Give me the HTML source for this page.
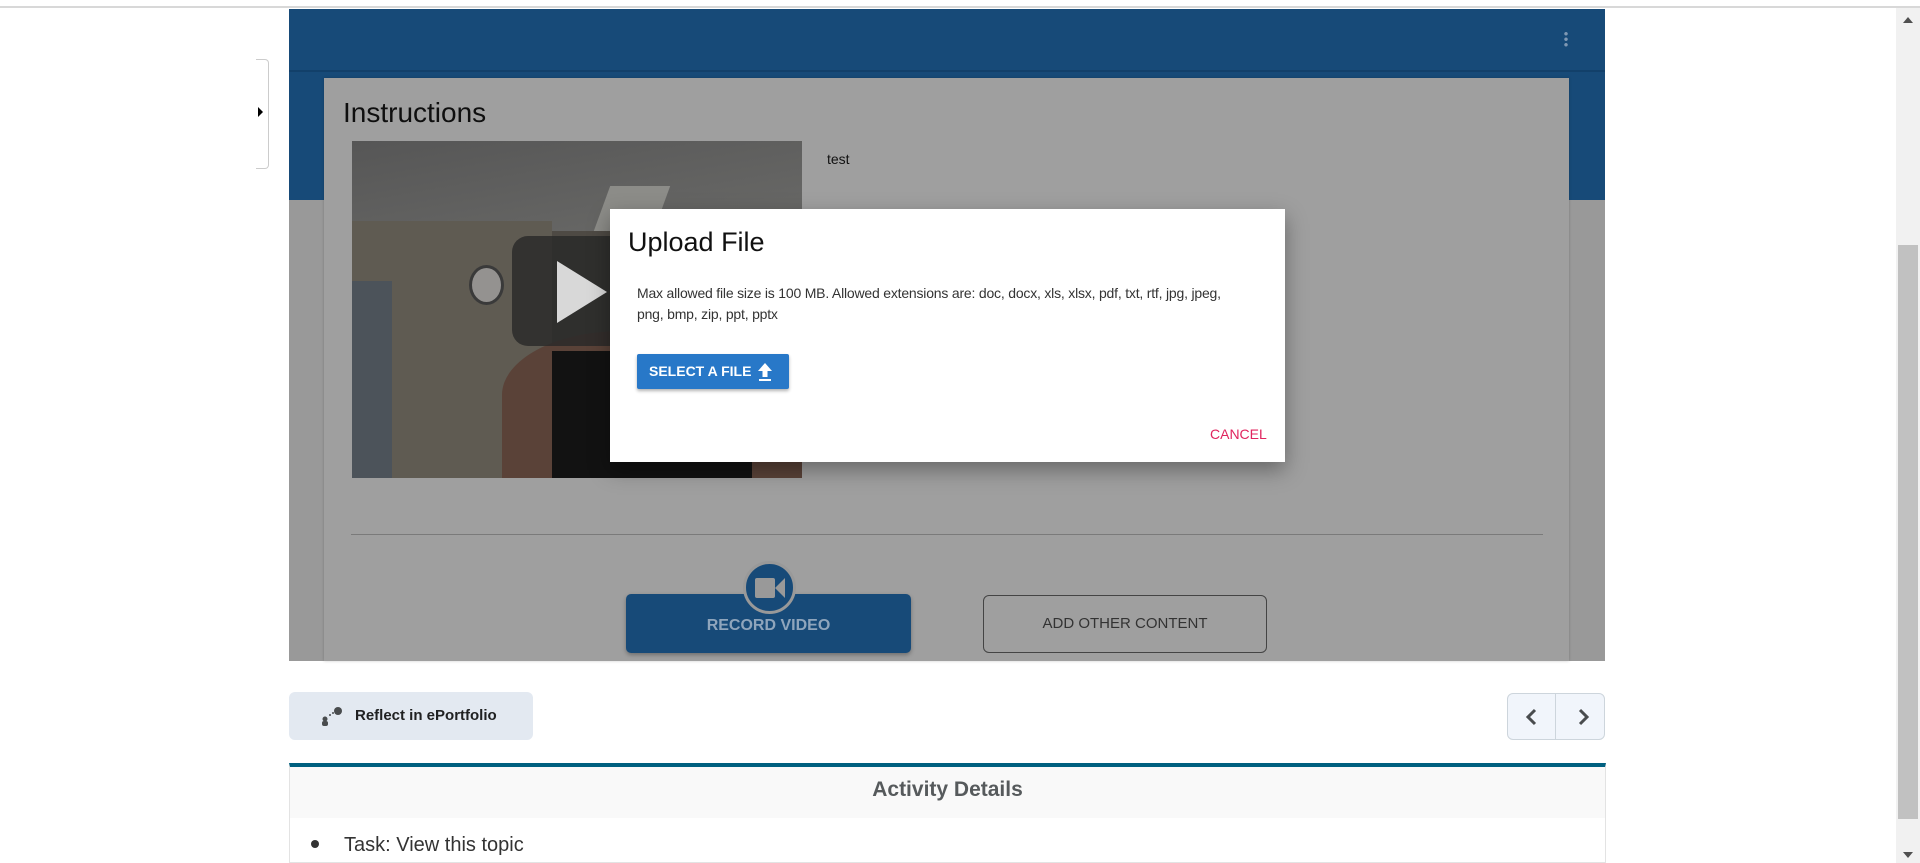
<!DOCTYPE html>
<html><head><style>
*{box-sizing:border-box;margin:0;padding:0}
body{width:1920px;height:863px;background:#fff;position:relative;overflow:hidden;font-family:"Liberation Sans",sans-serif}
.abs{position:absolute}
</style></head><body>
<div class="abs" style="left:0;top:0;width:1920px;height:8px;border-bottom:2px solid #d8d8d8;background:#fff"></div>
<div class="abs" style="left:256px;top:59px;width:13px;height:110px;border:1px solid #ccc;border-left:none;border-radius:0 4px 4px 0;background:#fff"></div>
<div class="abs" style="left:258px;top:107px;width:0;height:0;border-top:5px solid transparent;border-bottom:5px solid transparent;border-left:5px solid #000"></div>
<div class="abs" style="left:289px;top:9px;width:1316px;height:652px;background:#999"></div>
<div class="abs" style="left:289px;top:9px;width:1316px;height:191px;background:#174a78"></div>
<div class="abs" style="left:289px;top:70px;width:1316px;height:2px;background:#12406a"></div>
<div class="abs" style="left:1564px;top:31px;width:4px;height:16px;background:radial-gradient(circle,#7f98b3 1.5px,transparent 2px) 0 0/4px 5.5px"></div>
<div class="abs" style="left:324px;top:78px;width:1245px;height:583px;background:#9f9f9f;box-shadow:0 0 3px rgba(0,0,0,.2)"></div>
<div class="abs" style="left:343px;top:97px;font-size:28px;color:#0f0f0f">Instructions</div>
<div class="abs" style="left:827px;top:151px;font-size:14px;color:#111">test</div>
<div class="abs" style="left:352px;top:141px;width:450px;height:337px;overflow:hidden;background:#4e4a44">
 <div class="abs" style="left:0;top:0;width:450px;height:90px;background:linear-gradient(170deg,#565656,#6a6a68)"></div>
 <div class="abs" style="left:0;top:80px;width:200px;height:257px;background:#5f5b52"></div>
 <div class="abs" style="left:0;top:140px;width:40px;height:200px;background:#4c535a"></div>
 <div class="abs" style="left:250px;top:45px;width:60px;height:45px;background:#8c8c88;transform:skew(-20deg)"></div>
 <div class="abs" style="left:117px;top:124px;width:35px;height:40px;border-radius:50%;background:#949290;border:3px solid #3a3a3a"></div>
 <div class="abs" style="left:150px;top:190px;width:300px;height:160px;border-radius:40% 40% 0 0;background:#5a4238"></div>
 <div class="abs" style="left:200px;top:210px;width:200px;height:130px;background:#121212"></div>
 <div class="abs" style="left:160px;top:95px;width:120px;height:110px;background:rgba(40,40,40,.8);border-radius:16px"></div>
 <div class="abs" style="left:205px;top:120px;width:0;height:0;border-top:31px solid transparent;border-bottom:31px solid transparent;border-left:50px solid #d8d8d8"></div>
</div>
<div class="abs" style="left:351px;top:534px;width:1192px;height:1px;background:#7a7a7a"></div>
<div class="abs" style="left:626px;top:594px;width:285px;height:59px;background:#174a78;border-radius:5px;box-shadow:0 2px 4px rgba(0,0,0,.3);color:#8fa5bc;font-weight:bold;font-size:16px;text-align:center;line-height:64px">RECORD VIDEO</div>
<div class="abs" style="left:743px;top:561px;width:53px;height:53px;border-radius:50%;background:#174a78;border:3px solid #999"></div>
<div class="abs" style="left:755px;top:578px;width:20px;height:20px;background:#999;border-radius:2px"></div>
<div class="abs" style="left:773px;top:578px;width:0;height:0;border-top:10px solid transparent;border-bottom:10px solid transparent;border-right:10px solid #999;transform:translateX(2px)"></div>
<div class="abs" style="left:983px;top:595px;width:284px;height:58px;border:1px solid #444;border-radius:6px;color:#333;font-size:15px;text-align:center;line-height:56px">ADD OTHER CONTENT</div>
<div class="abs" style="left:610px;top:209px;width:675px;height:253px;background:#fff;box-shadow:0 8px 20px rgba(0,0,0,.35)">
 <div class="abs" style="left:18px;top:18px;font-size:27px;color:#111">Upload File</div>
 <div class="abs" style="left:27px;top:74px;width:590px;font-size:14px;letter-spacing:-0.2px;line-height:21px;color:#333">Max allowed file size is 100 MB. Allowed extensions are: doc, docx, xls, xlsx, pdf, txt, rtf, jpg, jpeg, png, bmp, zip, ppt, pptx</div>
 <div class="abs" style="left:27px;top:145px;width:152px;height:35px;background:#2878c8;border-radius:2px;box-shadow:0 2px 3px rgba(0,0,0,.3);color:#fff;font-weight:bold;font-size:14px;line-height:35px;padding-left:12px">SELECT A FILE</div>
 <svg class="abs" style="left:146px;top:153px" width="18" height="20"><path d="M9 1L2 9h4.5v6h5v-6H16z" fill="#fff"/><rect x="3" y="17" width="12" height="2" fill="#fff"/></svg>
 <div class="abs" style="left:600px;top:217px;font-size:14px;color:#e0245e">CANCEL</div>
</div>
<div class="abs" style="left:289px;top:692px;width:244px;height:48px;background:#e3e9f1;border-radius:6px;font-size:15px;font-weight:bold;color:#202122;line-height:48px;padding-left:66px">Reflect in ePortfolio</div>
<svg class="abs" style="left:320px;top:706px" width="24" height="20"><circle cx="18" cy="5" r="4" fill="#494c4e"/><circle cx="5" cy="13" r="2.5" fill="#494c4e"/><rect x="2" y="15" width="6" height="5" rx="2" fill="#494c4e"/><circle cx="10" cy="9" r="1" fill="#494c4e"/><circle cx="13" cy="7" r="1" fill="#494c4e"/></svg>
<div class="abs" style="left:1507px;top:693px;width:98px;height:47px;border:1px solid #cdd5dc;border-radius:6px;background:#f1f5fb"></div>
<div class="abs" style="left:1555px;top:693px;width:1px;height:47px;background:#cdd5dc"></div>
<svg class="abs" style="left:1522px;top:707px" width="20" height="20"><path d="M13 3L6 10l7 7" stroke="#494c4e" stroke-width="3" fill="none"/></svg>
<svg class="abs" style="left:1573px;top:707px" width="20" height="20"><path d="M7 3l7 7-7 7" stroke="#494c4e" stroke-width="3" fill="none"/></svg>
<div class="abs" style="left:289px;top:763px;width:1317px;height:100px;border:1px solid #e3e3e3;border-top:4px solid #006080;background:#fff"></div>
<div class="abs" style="left:290px;top:767px;width:1315px;height:51px;background:#f9f9f9;text-align:center;font-size:21px;font-weight:bold;color:#565a5c;line-height:46px">Activity Details</div>
<div class="abs" style="left:311px;top:840px;width:8px;height:8px;border-radius:50%;background:#333"></div>
<div class="abs" style="left:344px;top:834px;font-size:20px;color:#333">Task: View this topic</div>
<div class="abs" style="left:1896px;top:8px;width:24px;height:855px;background:#f1f1f1"></div>
<div class="abs" style="left:1898px;top:245px;width:20px;height:574px;background:#c1c1c1"></div>
<div class="abs" style="left:1903px;top:17px;border-left:5px solid transparent;border-right:5px solid transparent;border-bottom:6px solid #505050"></div>
<div class="abs" style="left:1903px;top:852px;border-left:5px solid transparent;border-right:5px solid transparent;border-top:6px solid #505050"></div>
</body></html>
